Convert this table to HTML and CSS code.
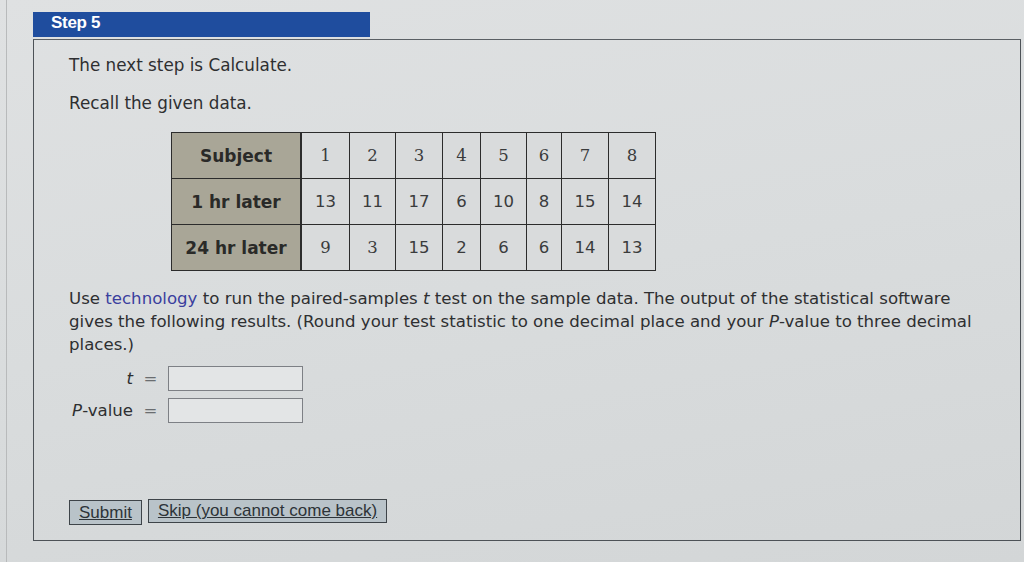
FILE: index.html
```html
<!DOCTYPE html>
<html>
<head>
<meta charset="utf-8">
<link rel="stylesheet" href="styles.css">
</head>
<body>
<div class="page">
  <div class="step-tab">Step 5</div>
  <div class="panel">
    <p class="line first">The next step is Calculate.</p>
    <p class="line second">Recall the given data.</p>
    <table class="data">
      <tr>
        <th>Subject</th>
        <td class="serif">1</td><td class="serif">2</td><td class="serif">3</td><td class="serif">4</td><td class="serif">5</td><td class="serif">6</td><td class="serif">7</td><td class="serif">8</td>
      </tr>
      <tr>
        <th>1 hr later</th>
        <td>13</td><td>11</td><td>17</td><td>6</td><td>10</td><td>8</td><td>15</td><td>14</td>
      </tr>
      <tr>
        <th>24 hr later</th>
        <td class="serif">9</td><td class="serif">3</td><td>15</td><td>2</td><td>6</td><td>6</td><td>14</td><td>13</td>
      </tr>
    </table>
    <p class="question">Use <span class="link">technology</span> to run the paired-samples <i>t</i> test on the sample data. The output of the statistical software gives the following results. (Round your test statistic to one decimal place and your <i>P</i>-value to three decimal places.)</p>
    <div class="answers">
      <div class="answer-row">
        <span class="label"><i>t</i></span><span class="eq">=</span><span class="input"></span>
      </div>
      <div class="answer-row">
        <span class="label"><i>P</i>-value</span><span class="eq">=</span><span class="input"></span>
      </div>
    </div>
    <div class="buttons">
      <span class="btn submit">Submit</span>
      <span class="btn skip">Skip (you cannot come back)</span>
    </div>
  </div>
</div>
</body>
</html>
```

FILE: styles.css
```css
html, body {
  margin: 0;
  padding: 0;
}
body {
  width: 1024px;
  height: 562px;
  overflow: hidden;
  background: linear-gradient(170deg, #dfe1e2 0%, #d9dcdd 50%, #d3d6d7 100%);
  font-family: "DejaVu Sans", Verdana, sans-serif;
  color: #2e2f31;
  position: relative;
}
body::before {
  content: "";
  position: absolute;
  left: 6px;
  top: 0;
  bottom: 0;
  width: 1px;
  background: #b8babb;
}
.page {
  padding: 12px 0 0 33px;
}
.step-tab {
  width: 319px;
  height: 25px;
  padding-left: 18px;
  background: #1f4d9e;
  color: #ffffff;
  font-family: "Liberation Sans", Arial, sans-serif;
  font-weight: bold;
  font-size: 17px;
  line-height: 22px;
  letter-spacing: -0.3px;
}
.panel {
  width: 988px;
  height: 502px;
  border: 1px solid #4d5257;
  border-top: 1px solid #5a5f64;
  margin-top: 2px;
  box-sizing: border-box;
  padding-left: 35px;
}
.line {
  margin: 0;
  font-size: 16.8px;
  line-height: 22px;
}
.first {
  margin-top: 14px;
}
.second {
  margin-top: 16px;
}
.data {
  border-collapse: collapse;
  margin: 18px 0 0 102px;
}
.data th, .data td {
  border: 1px solid #2c2c2c;
  height: 45px;
  padding: 0;
  text-align: center;
  font-size: 16.5px;
  font-weight: normal;
  color: #3a3b3c;
}
.data th {
  width: 128px;
  background: #a9a697;
  font-weight: bold;
  color: #2a2a28;
  font-size: 17px;
  border-right: 2px solid #2c2c2c;
}
.data td {
  background: #d9dbdc;
}
.data tr td:nth-of-type(1) { width: 47px; }
.data tr td:nth-of-type(2) { width: 45px; }
.data tr td:nth-of-type(3) { width: 46px; }
.data tr td:nth-of-type(4) { width: 37px; }
.data tr td:nth-of-type(5) { width: 45px; }
.data tr td:nth-of-type(6) { width: 34px; }
.data tr td:nth-of-type(7) { width: 46px; }
.data tr td:nth-of-type(8) { width: 46px; }
.data td.serif {
  font-family: "DejaVu Serif", Georgia, serif;
  font-size: 16.5px;
}
.question {
  margin: 16px 0 0 0;
  width: 912px;
  font-size: 16.6px;
  line-height: 23px;
}
.link {
  color: #3a3f9e;
}
.answers {
  margin-top: 10px;
  display: flex;
  flex-direction: column;
  gap: 7px;
}
.answer-row {
  display: flex;
  align-items: center;
  height: 25px;
  font-size: 16.6px;
}
.label {
  width: 64px;
  text-align: right;
}
.eq {
  width: 35px;
  text-align: center;
  color: #6a6d70;
}
.input {
  width: 133px;
  height: 23px;
  border: 1px solid #7d8085;
  background: #e3e5e6;
}
.buttons {
  margin-top: 77px;
  display: flex;
  gap: 6px;
  align-items: flex-start;
}
.btn {
  display: block;
  height: 23px;
  border: 1px solid #3e4449;
  background: #b9c3c9;
  font-family: "Liberation Sans", Arial, sans-serif;
  font-size: 17px;
  line-height: 23px;
  color: #2d3338;
  text-decoration: underline;
  padding: 0 9px;
}
.skip {
  margin-top: -1px;
  height: 22px;
  line-height: 22px;
}
```
